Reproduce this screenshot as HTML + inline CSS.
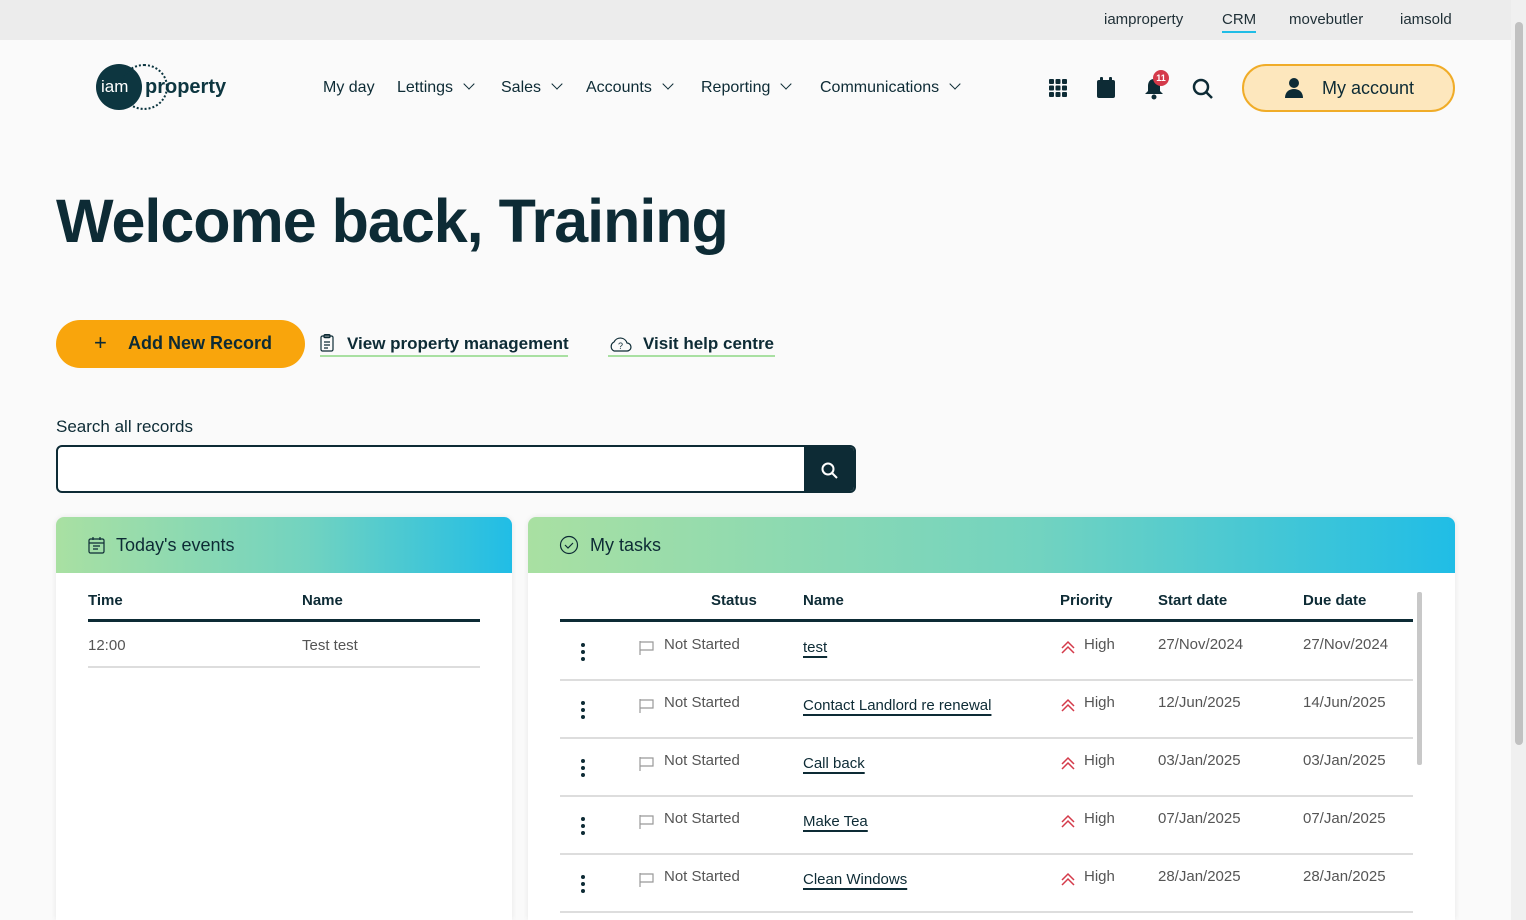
<!DOCTYPE html>
<html><head><meta charset="utf-8"><style>
*{box-sizing:border-box;margin:0;padding:0}
html,body{width:1526px;height:920px;overflow:hidden}
body{background:#fafafa;font-family:"Liberation Sans",sans-serif;color:#0d2b35;position:relative}
.abs{position:absolute}
.top{left:0;top:0;width:1511px;height:40px;background:#ececec;font-size:15px;color:#1f2f36}
.top span{position:absolute;top:11px}
.nav{font-size:16px;color:#0d2b35;top:79px}
.chev{display:inline-block;width:8px;height:8px;border-right:1.4px solid #0d2b35;border-bottom:1.4px solid #0d2b35;transform:rotate(45deg);margin-left:12px;position:relative;top:-4px}
h1{position:absolute;left:56px;top:186px;font-size:61px;font-weight:700;letter-spacing:-1px;color:#0d2b35}
.card{background:#fff;border-radius:8px 8px 0 0;box-shadow:0 0 6px rgba(0,0,0,.08);overflow:hidden}
.ch{height:56px;background:linear-gradient(90deg,#a9e0a2,#72d3c0 55%,#20bde6);font-size:18px;padding:18px 0 0 0}
.th{font-size:15px;font-weight:600;position:absolute}
.td{font-size:15px;color:#555;position:absolute}
.lnk{font-size:15px;color:#0d2b35;text-decoration:underline;text-underline-offset:4px;text-decoration-thickness:2px;position:absolute}
.dots{position:absolute;width:4px}
.dots i{display:block;width:4px;height:4px;border-radius:2px;background:#0d2b35;margin-bottom:3px}
.sep{position:absolute;height:2px;background:#ddd}
</style></head><body>
<div class="abs top"><span style="left:1104px">iamproperty</span><span style="left:1222px;border-bottom:2px solid #20bde6;padding-bottom:3px">CRM</span><span style="left:1289px">movebutler</span><span style="left:1400px">iamsold</span></div>
<div class="abs" style="left:1511px;top:0;width:15px;height:920px;background:#f0f0f0"></div>
<div class="abs" style="left:1515px;top:22px;width:8px;height:723px;background:#c1c1c1;border-radius:4px"></div>

<div class="abs" style="left:96px;top:64px;width:46px;height:46px;border-radius:50%;background:#0d3640"></div>
<div class="abs" style="left:120px;top:64px;width:48px;height:46px;border-radius:50%;border:2px dotted #0d3640"></div>
<div class="abs" style="left:101px;top:77px;color:#fff;font-size:17px">iam</div>
<div class="abs" style="left:145px;top:76px;color:#0d3640;font-size:20px;font-weight:700">property</div>

<div class="abs nav" style="left:323px">My day</div>
<div class="abs nav" style="left:397px">Lettings<span class="chev"></span></div>
<div class="abs nav" style="left:501px">Sales<span class="chev"></span></div>
<div class="abs nav" style="left:586px">Accounts<span class="chev"></span></div>
<div class="abs nav" style="left:701px">Reporting<span class="chev"></span></div>
<div class="abs nav" style="left:820px">Communications<span class="chev"></span></div>

<svg class="abs" style="left:1049px;top:79px" width="18" height="18" fill="#0d2b35"><g><rect x="0" y="0" width="5" height="5" rx="1"/><rect x="6.5" y="0" width="5" height="5" rx="1"/><rect x="13" y="0" width="5" height="5" rx="1"/><rect x="0" y="6.5" width="5" height="5" rx="1"/><rect x="6.5" y="6.5" width="5" height="5" rx="1"/><rect x="13" y="6.5" width="5" height="5" rx="1"/><rect x="0" y="13" width="5" height="5" rx="1"/><rect x="6.5" y="13" width="5" height="5" rx="1"/><rect x="13" y="13" width="5" height="5" rx="1"/></g></svg>
<svg class="abs" style="left:1097px;top:77px" width="18" height="21" fill="#0d2b35"><rect x="3" y="0" width="3" height="5" rx="1"/><rect x="12" y="0" width="3" height="5" rx="1"/><rect x="0" y="3" width="18" height="18" rx="2"/></svg>
<svg class="abs" style="left:1144px;top:76px" width="22" height="24" fill="#0d2b35"><path d="M10 3c-4 0-6 3-6 7v5l-3 3h18l-3-3v-5c0-4-2-7-6-7z"/><circle cx="10" cy="21" r="2.5"/></svg>
<div class="abs" style="left:1153px;top:70px;width:16px;height:16px;border-radius:50%;background:#d43a4a;color:#fff;font-size:9px;font-weight:700;text-align:center;line-height:16px">11</div>
<svg class="abs" style="left:1192px;top:78px" width="22" height="22" fill="none" stroke="#0d2b35" stroke-width="2.5"><circle cx="9" cy="9" r="7"/><path d="M14 14l6 6"/></svg>
<div class="abs" style="left:1242px;top:64px;width:213px;height:48px;border-radius:24px;background:#fde7bd;border:2px solid #f0ac28"></div>
<svg class="abs" style="left:1285px;top:78px" width="18" height="20" fill="#0d2b35"><circle cx="9" cy="5" r="5"/><path d="M0 20c0-6 4-9 9-9s9 3 9 9z"/></svg>
<div class="abs" style="left:1322px;top:78px;font-size:18px">My account</div>

<h1>Welcome back, Training</h1>

<div class="abs" style="left:56px;top:320px;width:249px;height:48px;border-radius:24px;background:#f9a50c"></div>
<div class="abs" style="left:94px;top:330px;font-size:22px;font-weight:300">+</div>
<div class="abs" style="left:128px;top:333px;font-size:18px;font-weight:700">Add New Record</div>
<svg class="abs" style="left:320px;top:334px" width="14" height="18" fill="none" stroke="#0d2b35" stroke-width="1.2"><rect x="1" y="2" width="12" height="15" rx="1.5"/><rect x="4" y="0.6" width="6" height="3" rx="1"/><path d="M4 8h6M4 11h6M4 14h4"/></svg>
<div class="abs" style="left:320px;top:333px;width:248px;height:24px;border-bottom:2px solid #a9e0a2"></div>
<div class="abs" style="left:347px;top:334px;font-size:17px;font-weight:700">View property management</div>
<svg class="abs" style="left:608px;top:335px" width="24" height="18" fill="none" stroke="#0d2b35" stroke-width="1.2"><path d="M6 16h13a4 4 0 0 0 0-8 7 7 0 0 0-13-1 5 5 0 0 0 0 9z"/><text x="10" y="14" font-size="9" fill="#0d2b35" stroke="none" font-family="Liberation Sans">?</text></svg>
<div class="abs" style="left:608px;top:333px;width:167px;height:24px;border-bottom:2px solid #a9e0a2"></div>
<div class="abs" style="left:643px;top:334px;font-size:17px;font-weight:700">Visit help centre</div>

<div class="abs" style="left:56px;top:417px;font-size:17px">Search all records</div>
<div class="abs" style="left:56px;top:445px;width:800px;height:48px;border:2px solid #0d2b35;border-radius:6px;background:#fff;overflow:hidden"><div style="position:absolute;right:0;top:0;width:50px;height:46px;background:#0d2b35"></div></div>
<svg class="abs" style="left:821px;top:462px" width="17" height="17" fill="none" stroke="#fff" stroke-width="2"><circle cx="7" cy="7" r="5.5"/><path d="M11 11l5 5"/></svg>

<div class="abs card" style="left:56px;top:517px;width:456px;height:403px">
<div class="ch"><span style="padding-left:60px">Today's events</span></div>
<svg style="position:absolute;left:32px;top:19px" width="17" height="18" fill="none" stroke="#0d2b35" stroke-width="1.2"><rect x="1" y="3" width="15" height="14" rx="1.5"/><path d="M5 1v3M12 1v3M1 7h15M5 10h7M5 13h5"/></svg>
<div class="th" style="left:32px;top:75px">Time</div><div class="th" style="left:246px;top:75px">Name</div>
<div class="abs" style="left:32px;top:102px;width:392px;height:3px;background:#0d2b35"></div>
<div class="td" style="left:32px;top:120px">12:00</div><div class="td" style="left:246px;top:120px">Test test</div>
<div class="sep" style="left:32px;top:149px;width:392px"></div>
</div>

<div class="abs card" style="left:528px;top:517px;width:927px;height:403px">
<div class="ch"><span style="padding-left:62px">My tasks</span></div>
<svg style="position:absolute;left:31px;top:18px" width="20" height="20" fill="none" stroke="#0d2b35" stroke-width="1.2"><circle cx="10" cy="10" r="8.5"/><path d="M6 10l3 3 5-5"/></svg>
<div class="th" style="left:183px;top:75px">Status</div><div class="th" style="left:275px;top:75px">Name</div><div class="th" style="left:532px;top:75px">Priority</div><div class="th" style="left:630px;top:75px">Start date</div><div class="th" style="left:775px;top:75px">Due date</div>
<div class="abs" style="left:32px;top:102px;width:853px;height:3px;background:#0d2b35"></div>
<div class="abs" style="left:889px;top:75px;width:5px;height:173px;background:#c8c8c8;border-radius:2px"></div>
</div>

<div id="rows"></div>
<script>
var r=[["test","27/Nov/2024","27/Nov/2024"],["Contact Landlord re renewal","12/Jun/2025","14/Jun/2025"],["Call back","03/Jan/2025","03/Jan/2025"],["Make Tea","07/Jan/2025","07/Jan/2025"],["Clean Windows","28/Jan/2025","28/Jan/2025"]];
var h="";r.forEach(function(x,i){var y=636+58*i;
h+='<div class="dots" style="left:581px;top:'+(y+7)+'px"><i></i><i></i><i></i></div>';
h+='<svg class="abs" style="left:639px;top:'+(y+4)+'px" width="16" height="16" fill="none" stroke="#999" stroke-width="1.2"><path d="M1 1v14M1 2h13v8H1"/></svg>';
h+='<div class="td" style="left:664px;top:'+y+'px">Not Started</div>';
h+='<div class="lnk" style="left:803px;top:'+(y+3)+'px">'+x[0]+'</div>';
h+='<svg class="abs" style="left:1060px;top:'+(y+4)+'px" width="16" height="14" fill="none" stroke="#d43a4a" stroke-width="1.5"><path d="M2 8l6-6 6 6M2 13l6-6 6 6"/></svg>';
h+='<div class="td" style="left:1084px;top:'+y+'px">High</div>';
h+='<div class="td" style="left:1158px;top:'+y+'px">'+x[1]+'</div><div class="td" style="left:1303px;top:'+y+'px">'+x[2]+'</div>';
h+='<div class="sep" style="left:560px;top:'+(y+43)+'px;width:853px"></div>';});
document.getElementById("rows").innerHTML=h;
</script>
</body></html>
